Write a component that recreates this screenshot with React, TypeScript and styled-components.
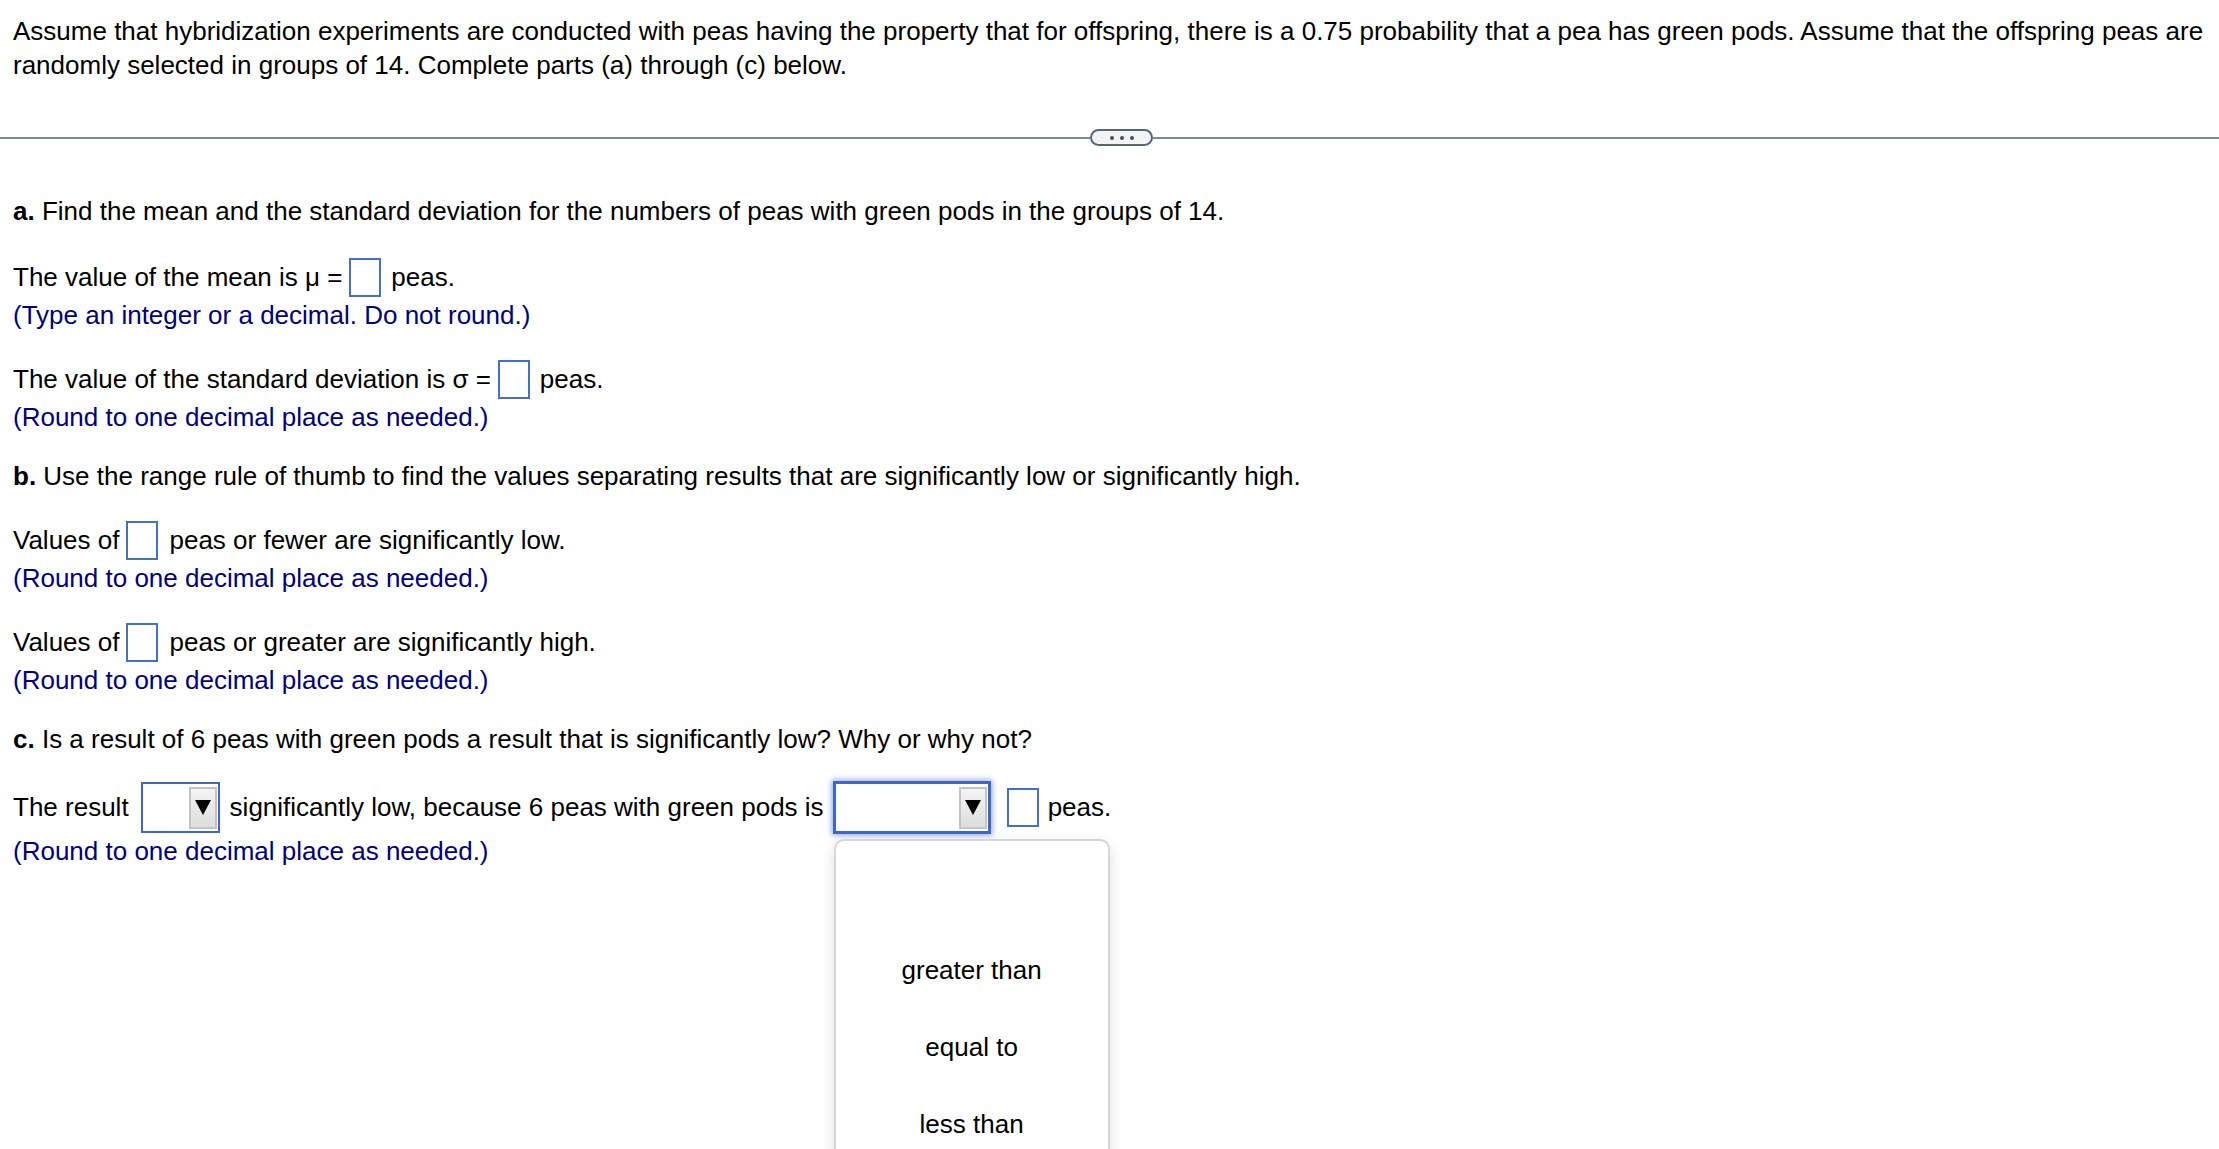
import React from 'react';
import styled, { createGlobalStyle } from 'styled-components';

const GlobalStyle = createGlobalStyle`
  html, body {
    margin: 0;
    padding: 0;
    background: #ffffff;
    overflow: hidden;
  }
  body {
    font-family: "Liberation Sans", Arial, sans-serif;
    font-size: 26px;
    color: #000000;
  }
`;

const Page = styled.div`
  width: 2219px;
  height: 1149px;
  overflow: hidden;
  padding-top: 14px;
  box-sizing: border-box;
`;

const Intro = styled.p`
  margin: 0;
  padding: 0 13px;
  line-height: 34px;
`;

const Divider = styled.div`
  margin-top: 47px;
  display: grid;
  grid-template-columns: 1090px 63px 1fr;
  align-items: center;
  height: 17px;
`;

const Rule = styled.div`
  height: 2px;
  background: #7f8896;
`;

const Pill = styled.button`
  width: 63px;
  height: 17px;
  box-sizing: border-box;
  border: 2px solid #5b6472;
  border-radius: 9px;
  background: #f2f3f5;
  padding: 0;
  display: flex;
  align-items: center;
  justify-content: center;
  gap: 6px;
`;

const Dot = styled.span`
  width: 4px;
  height: 4px;
  border-radius: 50%;
  background: #4a505a;
`;

const Body = styled.div`
  padding: 0 13px;
`;

const Heading = styled.p<{ $first?: boolean }>`
  margin: ${p => (p.$first ? '48px' : '25px')} 0 0;
  line-height: 34px;
`;

const Row = styled.div<{ $gap?: number }>`
  margin-top: ${p => p.$gap ?? 28}px;
  display: flex;
  align-items: center;
  min-height: 39px;
  white-space: nowrap;
`;

const Hint = styled.p<{ $flush?: boolean }>`
  margin: ${p => (p.$flush ? 0 : '1px')} 0 0;
  line-height: 34px;
  color: #00007f;
`;

const AnswerBox = styled.span<{ $before?: number; $after?: number }>`
  display: inline-block;
  width: 32px;
  height: 39px;
  box-sizing: border-box;
  border: 2px solid #4470c8;
  background: #ffffff;
  margin-left: ${p => p.$before ?? 7}px;
  margin-right: ${p => p.$after ?? 10}px;
`;

const SelectWrap = styled.div<{ $gap: number }>`
  position: relative;
  display: inline-block;
  margin-left: ${p => p.$gap}px;
`;

const Select = styled.div<{ $width: number; $focused?: boolean }>`
  width: ${p => p.$width}px;
  height: ${p => (p.$focused ? 53 : 51)}px;
  box-sizing: border-box;
  border: ${p => (p.$focused ? '3px' : '2px')} solid #3f66c9;
  box-shadow: ${p => (p.$focused ? '0 0 6px 1px rgba(63, 102, 201, 0.6)' : 'none')};
  background: #ffffff;
  display: flex;
  align-items: center;
  justify-content: flex-end;
  padding-right: 1px;
`;

const ArrowButton = styled.div`
  width: 28px;
  height: 42px;
  box-sizing: border-box;
  border: 2px solid #c4c4c4;
  background: linear-gradient(#f4f4f4, #dedede);
  display: flex;
  align-items: center;
  justify-content: center;
`;

const DropList = styled.ul`
  position: absolute;
  top: calc(100% + 5px);
  left: 1px;
  width: 276px;
  height: 340px;
  margin: 0;
  padding: 14px 0 0;
  list-style: none;
  box-sizing: border-box;
  background: #ffffff;
  border: 2px solid #d6d6d6;
  border-radius: 10px;
  box-shadow: 0 4px 14px rgba(0, 0, 0, 0.12);
  z-index: 10;
`;

const Option = styled.li`
  height: 77px;
  line-height: 77px;
  text-align: center;
  color: #000000;
`;

const Text = styled.span<{ $gap?: number }>`
  margin-left: ${p => p.$gap ?? 0}px;
`;

const Triangle = () => (
  <svg width="16" height="15" viewBox="0 0 16 15">
    <polygon points="0,0 16,0 8,15" fill="#000000" />
  </svg>
);

export default function App() {
  return (
    <Page>
      <GlobalStyle />
      <Intro>
        Assume that hybridization experiments are conducted with peas having the property that for offspring, there is a
        0.75 probability that a pea has green pods. Assume that the offspring peas are randomly selected in groups of 14.
        Complete parts (a) through (c) below.
      </Intro>

      <Divider>
        <Rule />
        <Pill aria-label="more">
          <Dot />
          <Dot />
          <Dot />
        </Pill>
        <Rule />
      </Divider>

      <Body>
        <Heading $first>
          <b>a.</b> Find the mean and the standard deviation for the numbers of peas with green pods in the groups of 14.
        </Heading>
        <Row $gap={30}>
          The value of the mean is μ =<AnswerBox />
          peas.
        </Row>
        <Hint>(Type an integer or a decimal. Do not round.)</Hint>
        <Row>
          The value of the standard deviation is σ =<AnswerBox />
          peas.
        </Row>
        <Hint>(Round to one decimal place as needed.)</Hint>

        <Heading>
          <b>b.</b> Use the range rule of thumb to find the values separating results that are significantly low or
          significantly high.
        </Heading>
        <Row>
          Values of<AnswerBox $after={11} />
          peas or fewer are significantly low.
        </Row>
        <Hint>(Round to one decimal place as needed.)</Hint>
        <Row>
          Values of<AnswerBox $after={11} />
          peas or greater are significantly high.
        </Row>
        <Hint>(Round to one decimal place as needed.)</Hint>

        <Heading>
          <b>c.</b> Is a result of 6 peas with green pods a result that is significantly low? Why or why not?
        </Heading>
        <Row $gap={25}>
          The result
          <SelectWrap $gap={12}>
            <Select $width={79}>
              <ArrowButton>
                <Triangle />
              </ArrowButton>
            </Select>
          </SelectWrap>
          <Text $gap={10}>significantly low, because 6 peas with green pods is</Text>
          <SelectWrap $gap={9}>
            <Select $width={158} $focused>
              <ArrowButton>
                <Triangle />
              </ArrowButton>
            </Select>
            <DropList>
              <Option>&nbsp;</Option>
              <Option>greater than</Option>
              <Option>equal to</Option>
              <Option>less than</Option>
            </DropList>
          </SelectWrap>
          <AnswerBox $before={16} $after={9} />
          peas.
        </Row>
        <Hint $flush>(Round to one decimal place as needed.)</Hint>
      </Body>
    </Page>
  );
}
